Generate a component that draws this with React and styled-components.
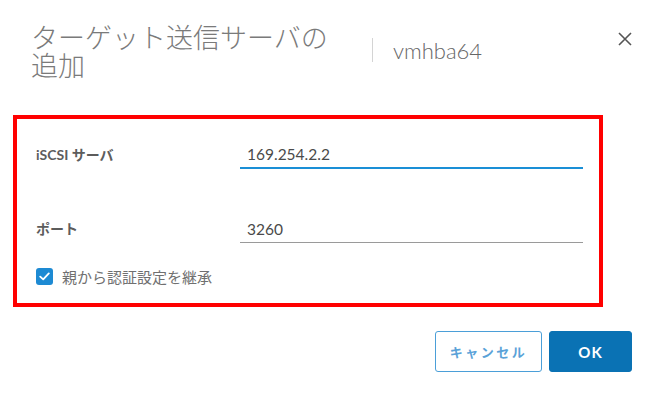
import React from 'react'
import styled, { createGlobalStyle } from 'styled-components'

const GlobalStyle = createGlobalStyle`
  html, body {
    margin: 0;
    padding: 0;
    background: #ffffff;
  }
  body {
    font-family: Lato, "Noto Sans CJK JP", sans-serif;
  }
  * {
    box-sizing: border-box;
  }
`

const Dialog = styled.div`
  width: 657px;
  height: 398px;
  padding: 0 25px 0 13px;
  background: #ffffff;
  display: flex;
  flex-direction: column;
`

const Header = styled.div`
  display: flex;
  align-items: flex-start;
  padding: 23px 0 0 18px;
`

const Title = styled.h3`
  margin: 0;
  width: 310px;
  font-family: "Noto Sans CJK JP", sans-serif;
  font-size: 27px;
  line-height: 28px;
  font-weight: 300;
  color: #7a7a7a;
`

const Context = styled.div`
  display: flex;
  align-items: center;
  height: 24px;
  margin-top: 15px;
  margin-left: 31px;
`

const Divider = styled.span`
  display: block;
  width: 1px;
  height: 24px;
  background: #d4d4d4;
`

const HostName = styled.span`
  margin-left: 20px;
  font-family: Lato, "Noto Sans", sans-serif;
  font-size: 22px;
  font-weight: 300;
  color: #666666;
`

const Close = styled.button`
  margin-left: auto;
  margin-top: 9px;
  width: 14px;
  height: 14px;
  padding: 0;
  border: 0;
  background: none;
  display: flex;
  cursor: pointer;
`

const Highlight = styled.div`
  margin-top: 36px;
  width: 590px;
  height: 192px;
  border: 4px solid #ff0000;
  padding: 20px 16px 18px 19px;
  display: flex;
  flex-direction: column;
`

const Row = styled.div`
  display: flex;
  align-items: center;
  margin-top: ${({ gap }) => gap || 0}px;
`

const Label = styled.label`
  width: 204px;
  font-family: Lato, "Noto Sans CJK JP", sans-serif;
  font-size: 14px;
  font-weight: 700;
  color: #5c5c5c;
`

const Input = styled.input`
  width: 343px;
  height: 30px;
  padding: 2px 0 0 7px;
  border: 0;
  border-bottom: ${({ focused }) =>
    focused ? '2px solid #1a8fd6' : '1px solid #9a9a9a'};
  outline: none;
  font-family: Lato, "Noto Sans", sans-serif;
  font-size: 15.5px;
  color: #4a4a4a;
  background: transparent;
`

const CheckRow = styled.label`
  display: flex;
  align-items: center;
  gap: 9px;
  margin-top: 25px;
  height: 17px;
`

const Box = styled.span`
  width: 17px;
  height: 17px;
  border-radius: 3px;
  background: #1d8ad3;
  display: flex;
  align-items: center;
  justify-content: center;
`

const CheckText = styled.span`
  font-family: "Noto Sans CJK JP", sans-serif;
  font-size: 15px;
  color: #707070;
`

const Footer = styled.div`
  display: flex;
  justify-content: flex-end;
  gap: 7px;
  margin-top: 24px;
`

const Button = styled.button`
  height: 41px;
  width: ${({ w }) => w}px;
  border-radius: 3px;
  border: 1.5px solid ${({ primary }) => (primary ? '#0a72b4' : '#4b9fd8')};
  background: ${({ primary }) => (primary ? '#0a72b4' : '#ffffff')};
  color: ${({ primary }) => (primary ? '#ffffff' : '#5aa2d8')};
  font-family: Lato, "Noto Sans CJK JP", sans-serif;
  font-size: ${({ primary }) => (primary ? 15 : 13)}px;
  font-weight: 700;
  letter-spacing: ${({ primary }) => (primary ? 1 : 2.5)}px;
  padding: 0;
  cursor: pointer;
`

export default function App() {
  return (
    <Dialog>
      <GlobalStyle />
      <Header>
        <Title>ターゲット送信サーバの追加</Title>
        <Context>
          <Divider />
          <HostName>vmhba64</HostName>
        </Context>
        <Close aria-label="close">
          <svg width="14" height="14" viewBox="0 0 14 14">
            <path
              d="M1 1 L13 13 M13 1 L1 13"
              stroke="#555"
              strokeWidth="1.6"
              fill="none"
            />
          </svg>
        </Close>
      </Header>

      <Highlight>
        <Row>
          <Label>iSCSI サーバ</Label>
          <Input focused defaultValue="169.254.2.2" />
        </Row>
        <Row gap={44}>
          <Label>ポート</Label>
          <Input defaultValue="3260" />
        </Row>
        <CheckRow>
          <Box>
            <svg width="11" height="9" viewBox="0 0 11 9">
              <path
                d="M1.2 4.6 L4.2 7.4 L9.8 1.4"
                stroke="#fff"
                strokeWidth="1.8"
                fill="none"
                strokeLinecap="round"
                strokeLinejoin="round"
              />
            </svg>
          </Box>
          <CheckText>親から認証設定を継承</CheckText>
        </CheckRow>
      </Highlight>

      <Footer>
        <Button w={107}>キャンセル</Button>
        <Button w={83} primary>
          OK
        </Button>
      </Footer>
    </Dialog>
  )
}
